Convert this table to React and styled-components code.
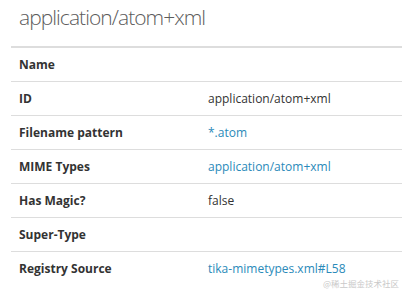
import styled, { createGlobalStyle } from "styled-components";

const GlobalStyle = createGlobalStyle`
  html, body {
    margin: 0;
    padding: 0;
    background: #fff;
  }
  body {
    font-family: "Open Sans", "Liberation Sans", sans-serif;
    color: #333;
  }
`;

const Page = styled.div`
  position: relative;
  width: 402px;
  height: 292px;
  overflow: hidden;
  padding: 0 0 0 11px;
  box-sizing: border-box;
`;

const Title = styled.h1`
  margin: 0;
  padding: 2px 0 0 8px;
  height: 46px;
  box-sizing: border-box;
  font-family: "Open Sans", sans-serif;
  font-size: 21px;
  font-weight: 300;
  letter-spacing: -0.95px;
  line-height: 30px;
  color: #5c5c5c;
`;

const Table = styled.table`
  width: 400px;
  border-collapse: collapse;
  border-top: 2px solid #ddd;
  font-size: 12px;
  line-height: 17px;
`;

const Row = styled.tr`
  & + & {
    border-top: 1px solid #ddd;
  }
`;

const Label = styled.th`
  width: 173px;
  padding: 8px;
  text-align: left;
  font-weight: 700;
  color: #333;
`;

const Value = styled.td`
  padding: 8px;
  color: ${(p) => (p.$link ? "#2a8ab9" : "#333")};
`;

const Watermark = styled.div`
  position: absolute;
  right: 3px;
  bottom: 3px;
  font-family: "Noto Sans CJK SC", sans-serif;
  font-size: 8.5px;
  color: #c9c9c9;
`;

const rows = [
  { label: "Name", value: "" },
  { label: "ID", value: "application/atom+xml" },
  { label: "Filename pattern", value: "*.atom", link: true },
  { label: "MIME Types", value: "application/atom+xml", link: true },
  { label: "Has Magic?", value: "false" },
  { label: "Super-Type", value: "" },
  { label: "Registry Source", value: "tika-mimetypes.xml#L58", link: true },
];

const App = () => (
  <Page>
    <GlobalStyle />
    <Title>application/atom+xml</Title>
    <Table>
      <tbody>
        {rows.map((r) => (
          <Row key={r.label}>
            <Label>{r.label}</Label>
            <Value $link={r.link}>{r.value}</Value>
          </Row>
        ))}
      </tbody>
    </Table>
    <Watermark>@稀土掘金技术社区</Watermark>
  </Page>
);

export default App;
